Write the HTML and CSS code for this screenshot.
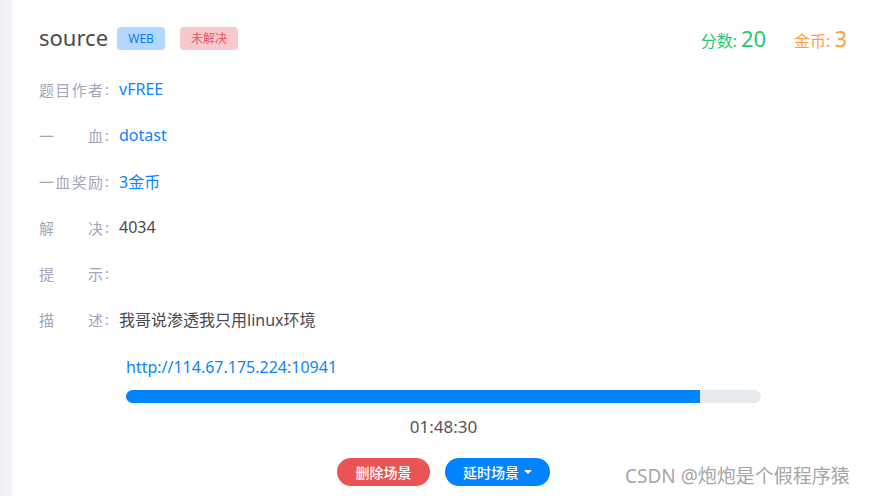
FILE: index.html
```html
<!DOCTYPE html>
<html lang="zh">
<head>
<meta charset="utf-8">
<link rel="stylesheet" href="styles.css">
</head>
<body>
<div class="page">
  <div class="card">
    <div class="header">
      <div class="title-wrap">
        <span class="title">source</span>
        <span class="badge badge-web">WEB</span>
        <span class="badge badge-unsolved">未解决</span>
      </div>
      <div class="stats">
        <span class="stat stat-score"><span class="stat-label">分数:</span><span class="stat-num">20</span></span>
        <span class="stat stat-coin"><span class="stat-label">金币:</span><span class="stat-num">3</span></span>
      </div>
    </div>
    <div class="row"><span class="label"><span class="label-text">题目作者</span>:</span><span class="value link">vFREE</span></div>
    <div class="row"><span class="label"><span class="label-text">一血</span>:</span><span class="value link">dotast</span></div>
    <div class="row"><span class="label"><span class="label-text">一血奖励</span>:</span><span class="value link">3金币</span></div>
    <div class="row"><span class="label"><span class="label-text">解决</span>:</span><span class="value">4034</span></div>
    <div class="row"><span class="label"><span class="label-text">提示</span>:</span><span class="value"></span></div>
    <div class="row"><span class="label"><span class="label-text">描述</span>:</span><span class="value">我哥说渗透我只用linux环境</span></div>
    <div class="scene">
      <div class="scene-url">http://114.67.175.224:10941</div>
      <div class="progress"><div class="progress-fill" style="width: 90.4%"></div></div>
      <div class="timer">01:48:30</div>
      <div class="actions">
        <button class="btn btn-danger">删除场景</button>
        <button class="btn btn-primary">延时场景<span class="caret"></span></button>
      </div>
    </div>
  </div>
  <div class="watermark">CSDN @炮炮是个假程序猿</div>
</div>
</body>
</html>
```
FILE: styles.css
```css
html, body {
  margin: 0;
  padding: 0;
  background: #f2f3f5;
}
body {
  font-family: "Noto Sans", "Noto Sans CJK SC", sans-serif;
  width: 872px;
  height: 496px;
  overflow: hidden;
}
.page {
  position: relative;
  height: 496px;
  padding-left: 12px;
  background: linear-gradient(to right, #eef0f3, #f6f7f9 12px);
}
.card {
  background: #fff;
  height: 496px;
  padding: 16px 25px 0 27px;
  box-sizing: border-box;
  box-shadow: -2px 0 6px rgba(0,0,0,0.03);
}
.header {
  display: flex;
  justify-content: space-between;
  align-items: center;
  height: 44px;
  margin-bottom: 6px;
}
.title-wrap {
  display: flex;
  align-items: center;
}
.title {
  font-size: 22px;
  color: #4b4b4b;
  font-weight: 400;
  margin-right: 9px;
  position: relative;
  top: -1px;
}
.badge {
  display: inline-flex;
  align-items: center;
  justify-content: center;
  height: 23px;
  border-radius: 4px;
  font-size: 12px;
  box-sizing: border-box;
}
.badge-web {
  width: 48px;
  background: #b3d8ff;
  color: #0a7cf0;
  margin-right: 15px;
}
.badge-unsolved {
  width: 58px;
  background: #f9c8cd;
  color: #e5545f;
}
.stats {
  display: flex;
  align-items: baseline;
  gap: 28px;
}
.stat {
  display: inline-flex;
  align-items: baseline;
}
.stat-label {
  font-size: 16px;
  margin-right: 4px;
}
.stat-num {
  font-size: 22px;
}
.stat-score { color: #28c76f; }
.stat-coin { color: #ff9f43; }
.row {
  display: flex;
  align-items: center;
  height: 46px;
  font-size: 15px;
}
.label {
  display: inline-flex;
  width: 80px;
  color: #a3a6bb;
}
.label-text {
  display: inline-block;
  width: 64px;
  text-align: justify;
  text-align-last: justify;
  margin-right: 2px;
}
.value {
  color: #4b4b4b;
  font-size: 16px;
}
.value.link {
  color: #0a84ff;
}
.scene {
  padding-left: 87px;
  width: 635px;
}
.scene-url {
  color: #0a84ff;
  font-size: 16px;
  line-height: 20px;
  margin-top: 15px;
}
.progress {
  margin-top: 13px;
  height: 13px;
  border-radius: 7px;
  background: #e7eaed;
  overflow: hidden;
}
.progress-fill {
  height: 100%;
  background: #0084ff;
}
.timer {
  text-align: center;
  color: #555;
  font-size: 17px;
  line-height: 20px;
  margin-top: 14px;
}
.actions {
  display: flex;
  justify-content: center;
  gap: 15px;
  margin-top: 21px;
}
.btn {
  border: none;
  height: 28px;
  border-radius: 14px;
  color: #fff;
  font-family: "Noto Sans", "Noto Sans CJK SC", sans-serif;
  font-size: 14px;
  font-weight: 500;
  padding: 0;
  display: inline-flex;
  align-items: center;
  justify-content: center;
}
.btn-danger {
  background: #ea5455;
  width: 93px;
}
.btn-primary {
  background: #0084ff;
  width: 105px;
}
.caret {
  display: inline-block;
  width: 0;
  height: 0;
  margin-left: 5px;
  border-left: 4px solid transparent;
  border-right: 4px solid transparent;
  border-top: 4px solid #fff;
}
.watermark {
  position: absolute;
  left: 625px;
  top: 461px;
  font-size: 19px;
  color: #a6a6a6;
  white-space: nowrap;
  text-shadow: 0 0 1px #fff;
}
```
